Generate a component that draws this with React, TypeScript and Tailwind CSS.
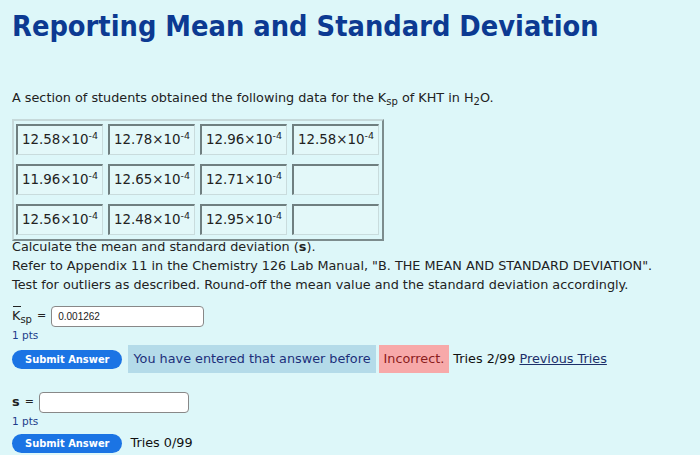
import React from "react";

const cells: (string | null)[][] = [
  ["12.58", "12.78", "12.96", "12.58"],
  ["11.96", "12.65", "12.71", null],
  ["12.56", "12.48", "12.95", null],
];

function Cell({ v }: { v: string | null }) {
  return (
    <div className="h-[31px] border border-t-2 border-l-2 border-t-[#6f7f80] border-l-[#6f7f80] border-r-[#c9dcdd] border-b-[#c9dcdd] flex items-center pl-[4px] text-[13.4px] text-[#222] bg-[#e3f8f9]">
      {v && (
        <span>
          {v}×10<sup className="text-[9.5px]">-4</sup>
        </span>
      )}
    </div>
  );
}

function SubmitBtn() {
  return (
    <button className="h-[19px] px-[13px] rounded-full bg-[#1b74e4] text-white text-[11px] font-bold leading-none flex items-center font-['DejaVu_Sans_Condensed','DejaVu_Sans',sans-serif]">
      Submit Answer
    </button>
  );
}

export default function App() {
  return (
    <div className="w-[700px] h-[455px] overflow-hidden bg-[#ddf7f9] font-['DejaVu_Sans',sans-serif] text-[#222]">
      <div className="pl-[12px] pt-[8px]">
        <h1 className="text-[28.7px] font-bold text-[#0c3a92] leading-[36px] font-['DejaVu_Sans_Condensed','DejaVu_Sans',sans-serif]">
          Reporting Mean and Standard Deviation
        </h1>
        <p className="mt-[45px] text-[12.8px] leading-[18px]">
          A section of students obtained the following data for the K<sub className="text-[10px]">sp</sub> of KHT in H<sub className="text-[10px]">2</sub>O.
        </p>
        <div className="mt-[12px] w-[372px] border-2 border-t-[#c6d9da] border-l-[#c6d9da] border-r-[#7c8c8d] border-b-[#7c8c8d] pt-[3px] pb-[4px] pl-[2px]">
          <div className="grid grid-cols-[87px_87px_87px_87px] gap-x-[5px] gap-y-[9px]">
            {cells.map((row, i) =>
              row.map((v, j) => <Cell key={`${i}-${j}`} v={v} />)
            )}
          </div>
        </div>
        <div className="text-[12.8px] leading-[19px] mt-[-4px]">
          <p>Calculate the mean and standard deviation (<b>s</b>).</p>
          <p>Refer to Appendix 11 in the Chemistry 126 Lab Manual, "B. THE MEAN AND STANDARD DEVIATION".</p>
          <p>Test for outliers as described. Round-off the mean value and the standard deviation accordingly.</p>
        </div>
        <div className="mt-[11px] flex items-center h-[22px]">
          <span className="text-[12.8px] relative">
            <span className="relative">
              K
              <span className="absolute left-[1px] top-[-2px] w-[8px] h-[1px] bg-[#222]" />
            </span>
            <sub className="text-[10px]">sp</sub>
          </span>
          <span className="ml-[5px] text-[11px]">=</span>
          <div className="ml-[5px] w-[153px] h-[21px] rounded-[4px] border border-[#888] bg-white flex items-center px-[6px] text-[10px] font-['Liberation_Sans',sans-serif]">
            0.001262
          </div>
        </div>
        <div className="text-[10.5px] text-[#1c3d8a] leading-[16px]">1 pts</div>
        <div className="flex items-center mt-[2px] h-[28px]">
          <SubmitBtn />
          <div className="ml-[6px] h-[28px] px-[5px] bg-[#b4dbe9] text-[#1c2f7a] text-[12.8px] flex items-center">
            You have entered that answer before
          </div>
          <div className="ml-[3px] h-[28px] px-[5px] bg-[#f7a9a9] text-[#8a1c1c] text-[12.8px] flex items-center">
            Incorrect.
          </div>
          <span className="ml-[4px] text-[12.8px] text-[#111]">Tries 2/99</span>
          <span className="ml-[4px] text-[12.8px] text-[#1c2f6a] underline">Previous Tries</span>
        </div>
        <div className="mt-[18px] flex items-center h-[22px]">
          <b className="text-[12.8px]">s</b>
          <span className="ml-[5px] text-[11px]">=</span>
          <div className="ml-[5px] w-[150px] h-[21px] rounded-[4px] border border-[#888] bg-white" />
        </div>
        <div className="text-[10.5px] text-[#1c3d8a] leading-[16px]">1 pts</div>
        <div className="flex items-center mt-[4px] h-[20px]">
          <SubmitBtn />
          <span className="ml-[8px] text-[12.8px] text-[#111]">Tries 0/99</span>
        </div>
      </div>
    </div>
  );
}
